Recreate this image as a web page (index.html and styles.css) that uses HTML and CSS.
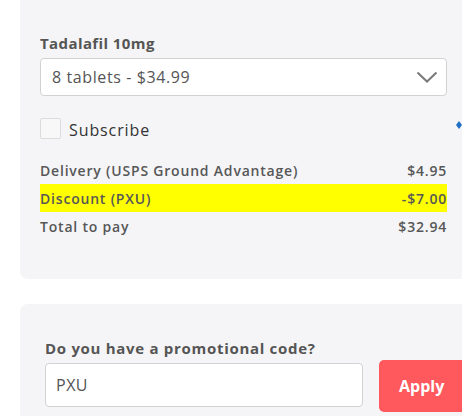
FILE: index.html
```html
<!DOCTYPE html>
<html>
<head>
<meta charset="utf-8">
<link rel="stylesheet" href="styles.css">
</head>
<body>
<div class="page">
  <section class="card order">
    <h2 class="product">Tadalafil 10mg</h2>
    <div class="select">
      <span class="select-text">8 tablets - $34.99</span>
      <svg class="chevron" width="22" height="12" viewBox="0 0 22 12"><path d="M1.5 1.5 L11 10.5 L20.5 1.5" fill="none" stroke="#7a7a7a" stroke-width="2"/></svg>
    </div>
    <label class="subscribe">
      <span class="checkbox"></span>
      <span class="subscribe-text">Subscribe</span>
      <span class="marker"></span>
    </label>
    <div class="totals">
      <div class="row"><span>Delivery (USPS Ground Advantage)</span><span>$4.95</span></div>
      <div class="row highlight"><span>Discount (PXU)</span><span>-$7.00</span></div>
      <div class="row"><span>Total to pay</span><span>$32.94</span></div>
    </div>
  </section>
  <section class="card promo">
    <h3 class="promo-title">Do you have a promotional code?</h3>
    <div class="promo-row">
      <div class="promo-input">PXU</div>
      <button class="apply">Apply</button>
    </div>
  </section>
</div>
</body>
</html>
```
FILE: styles.css
```css
html, body {
  margin: 0;
  padding: 0;
  background: #ffffff;
  overflow: hidden;
}
body {
  width: 462px;
  height: 416px;
  font-family: "Open Sans", "Noto Sans", sans-serif;
  color: #555555;
}
.page {
  display: flex;
  flex-direction: column;
  gap: 25px;
  padding-left: 20px;
}
.card {
  background: #f5f5f7;
  border-radius: 0 0 8px 8px;
}
.order {
  width: 407px;
  padding: 33px 40px 39px 20px;
}
.product {
  margin: 0 0 5px;
  font-size: 15px;
  line-height: 20px;
  font-weight: 700;
  letter-spacing: 0.4px;
  color: #555555;
}
.select {
  height: 36px;
  background: #ffffff;
  border: 1px solid #d2d2d2;
  border-radius: 4px;
  display: flex;
  align-items: center;
  justify-content: space-between;
  padding: 0 8px 0 11px;
}
.select-text {
  font-size: 16px;
  letter-spacing: 0.6px;
  color: #555555;
}
.chevron {
  display: block;
}
.subscribe {
  margin-top: 22px;
  display: flex;
  align-items: center;
  position: relative;
  height: 21px;
}
.checkbox {
  width: 19px;
  height: 19px;
  border: 1px solid #dcdcdc;
  border-radius: 2px;
  background: #f8f8f8;
}
.subscribe-text {
  margin-left: 8px;
  margin-top: 3px;
  font-size: 16px;
  letter-spacing: 0.9px;
  color: #333333;
}
.marker {
  position: absolute;
  left: 416px;
  top: 3px;
  width: 6px;
  height: 8px;
  background: #1f6fc6;
  clip-path: polygon(50% 0, 100% 50%, 50% 100%, 0 50%);
}
.totals {
  margin-top: 17px;
}
.row {
  height: 28px;
  display: flex;
  align-items: center;
  justify-content: space-between;
  font-size: 14px;
  font-weight: 600;
  letter-spacing: 0.8px;
  color: #575757;
}
.highlight {
  background: #ffff00;
}
.promo {
  border-radius: 8px 0 0 0;
  padding: 34px 0 20px 25px;
}
.promo-title {
  margin: 0 0 2px;
  font-size: 15px;
  line-height: 20px;
  font-weight: 700;
  letter-spacing: 0.7px;
  color: #555555;
}
.promo-row {
  display: flex;
  align-items: flex-start;
  gap: 16px;
}
.promo-input {
  flex-shrink: 0;
  width: 306px;
  height: 42px;
  margin-top: 3px;
  background: #ffffff;
  border: 1px solid #d2d2d2;
  border-radius: 4px;
  padding-left: 10px;
  display: flex;
  align-items: center;
  font-size: 16px;
  letter-spacing: 0.5px;
  color: #555555;
}
.apply {
  flex-shrink: 0;
  width: 96px;
  height: 52px;
  border: none;
  border-radius: 5px;
  background: #ff585d;
  color: #ffffff;
  font-family: "Open Sans", sans-serif;
  font-size: 16px;
  font-weight: 700;
  text-align: left;
  padding-left: 20px;
}
```
